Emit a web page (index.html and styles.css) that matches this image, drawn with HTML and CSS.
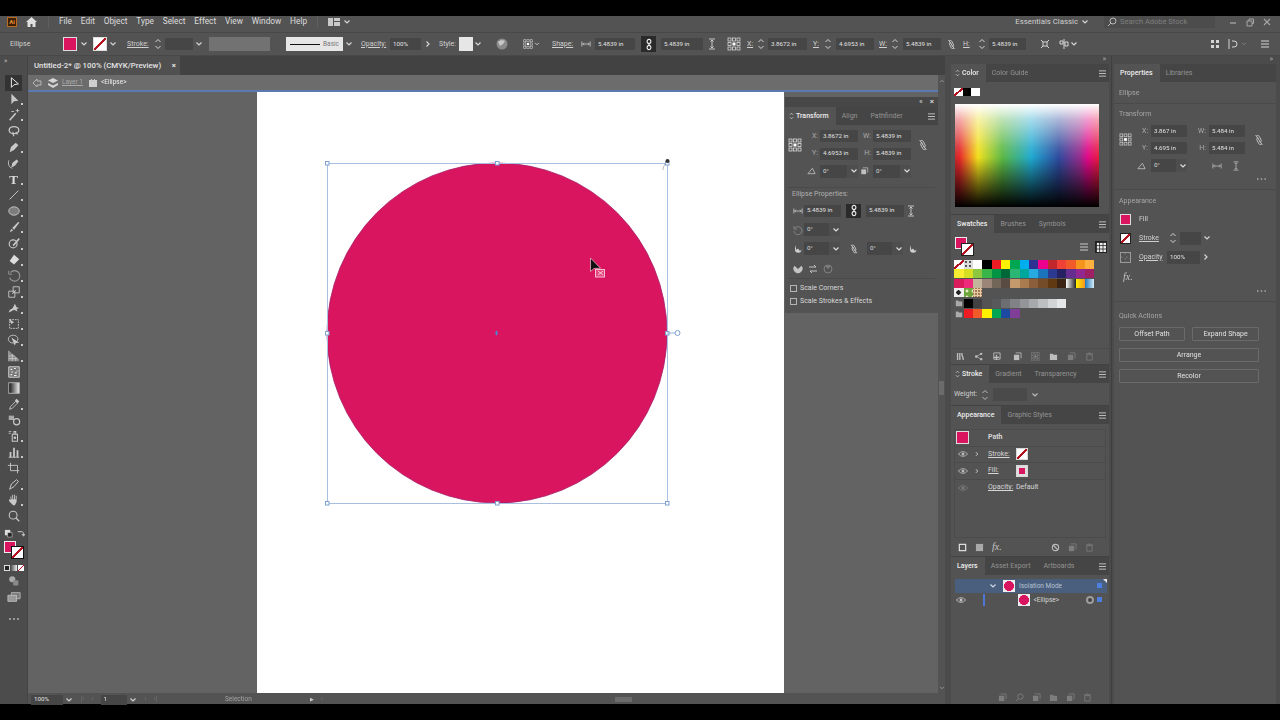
FILE: index.html
```html
<!DOCTYPE html>
<html lang="en">
<head>
    <meta charset="UTF-8">
    <title>Untitled-2* @ 100% (CMYK/Preview)</title>
    <link rel="stylesheet" href="styles.css">
</head>
<body>

<svg class="sprite" xmlns="http://www.w3.org/2000/svg">
    <symbol id="chev" viewBox="0 0 8 8"><path d="M1.5 2.5 4 5l2.500-2.500" fill="none" stroke="currentColor" stroke-width="1.200"/></symbol>
    <symbol id="right" viewBox="0 0 8 8"><path d="M2.500 1.500 5 4 2.500 6.500" fill="none" stroke="currentColor" stroke-width="1.200"/></symbol>
    <symbol id="spin" viewBox="0 0 8 12"><path d="M1.500 4 4 1.500 6.500 4M1.500 8 4 10.500 6.500 8" fill="none" stroke="currentColor" stroke-width="1"/></symbol>
    <symbol id="menu" viewBox="0 0 10 8"><path d="M1 1h8M1 4h8M1 7h8" stroke="currentColor" stroke-width="1.100"/></symbol>
    <symbol id="eye" viewBox="0 0 10 8"><path d="M.5 4C2.500 1 7.500 1 9.500 4 7.500 7 2.500 7 .5 4Z" fill="none" stroke="currentColor" stroke-width=".9"/><circle cx="5" cy="4" r="1.500" fill="currentColor"/></symbol>
    <symbol id="unlink" viewBox="0 0 12 14"><path d="M3 2.500c1-1.500 3-1 3.500.5l2 4c1 2-1 3-2 2M9 11.500c-1 1.500-3 1-3.500-.5l-2-4c-1-2 1-3 2-2M2 1l8 12" fill="none" stroke="currentColor" stroke-width="1.200"/></symbol>
    <symbol id="chain" viewBox="0 0 8 14"><rect x="2" y="1.500" width="4" height="4.500" rx="2" fill="none" stroke="currentColor" stroke-width="1.200"/><rect x="2" y="8" width="4" height="4.500" rx="2" fill="none" stroke="currentColor" stroke-width="1.200"/><path d="M4 5v4" stroke="currentColor" stroke-width="1.200"/></symbol>
    <symbol id="refpoint" viewBox="0 0 14 14"><g fill="none" stroke="currentColor" stroke-width=".8"><rect x="1" y="1" width="3" height="3"/><rect x="5.500" y="1" width="3" height="3"/><rect x="10" y="1" width="3" height="3"/><rect x="1" y="5.500" width="3" height="3"/><rect x="10" y="5.500" width="3" height="3"/><rect x="1" y="10" width="3" height="3"/><rect x="5.500" y="10" width="3" height="3"/><rect x="10" y="10" width="3" height="3"/></g><rect x="5.500" y="5.500" width="3" height="3" fill="#fff"/></symbol>
    <symbol id="hsize" viewBox="0 0 12 8"><path d="M1 1v6M11 1v6M2 4h8M3.500 2.500 2 4l1.500 1.500M8.500 2.500 10 4 8.500 5.500" fill="none" stroke="currentColor" stroke-width=".9"/></symbol>
    <symbol id="vsize" viewBox="0 0 8 12"><path d="M1 1h6M1 11h6M4 2v8M2.500 3.500 4 2l1.500 1.500M2.500 8.500 4 10l1.500-1.500" fill="none" stroke="currentColor" stroke-width=".9"/></symbol>
    <symbol id="corner" viewBox="0 0 10 10"><path d="M2 0v4.500a3.200 3.200 0 0 0 6.400 0L7 6 5 3.500 3.500 5Z" fill="currentColor" transform="translate(0 1)"/></symbol>
    <symbol id="trash" viewBox="0 0 10 10"><path d="M2 3h6v6H2zM1 2h8M4 1h2" fill="none" stroke="currentColor" stroke-width=".9"/></symbol>
    <symbol id="newitem" viewBox="0 0 10 10"><path d="M1 3h6v6H1z" fill="currentColor"/><path d="M3 1h6v6" fill="none" stroke="currentColor" stroke-width=".9"/></symbol>
    <symbol id="folder" viewBox="0 0 10 10"><path d="M1 2h3l1 1h4v6H1z" fill="currentColor"/></symbol>
    <symbol id="dots" viewBox="0 0 12 4"><circle cx="2" cy="2" r=".9" fill="currentColor"/><circle cx="6" cy="2" r=".9" fill="currentColor"/><circle cx="10" cy="2" r=".9" fill="currentColor"/></symbol>
    <symbol id="noentry" viewBox="0 0 10 10"><circle cx="5" cy="5" r="3.500" fill="none" stroke="currentColor" stroke-width="1.200"/><path d="m2.500 2.500 5 5" stroke="currentColor" stroke-width="1.200"/></symbol>
    <symbol id="angle" viewBox="0 0 10 8"><path d="M1 7h8L6 1Z" fill="none" stroke="currentColor" stroke-width=".9"/></symbol>
    <symbol id="library" viewBox="0 0 10 10"><path d="M1 1h1.500v8H1zM3.500 1H5v8H3.500zM5.500 1.500 7 1l2 7.500-1.500.5Z" fill="currentColor"/></symbol>
    <symbol id="share" viewBox="0 0 10 10"><circle cx="2.500" cy="5" r="1.500" fill="currentColor"/><circle cx="8" cy="2" r="1.300" fill="currentColor"/><circle cx="8" cy="8" r="1.300" fill="currentColor"/><path d="M8 2 2.500 5 8 8" fill="none" stroke="currentColor" stroke-width=".8"/></symbol>
    <symbol id="place" viewBox="0 0 10 10"><path d="M2 1h7v7H2z" fill="none" stroke="currentColor"/><path d="M5 3v6M2 6h6" stroke="currentColor" stroke-width="1.400"/></symbol>
</svg>

<div class="black-bar"></div>

<header class="menu-bar">
    <span class="ai-logo">Ai</span>
    <svg class="home-ico" viewBox="0 0 12 12"><path d="M6 1 .5 6H2v5h3V8h2v3h3V6h1.500Z" fill="currentColor"/></svg>
    <span class="menu-sep"></span>
    <nav class="menu-items">
        <span>File</span><span>Edit</span><span>Object</span><span>Type</span><span>Select</span><span>Effect</span><span>View</span><span>Window</span><span>Help</span>
    </nav>
    <span class="menu-sep"></span>
    <svg class="layout-ico" viewBox="0 0 12 8"><path d="M0 0h5v8H0zM6 0h6v3H6zM6 4h6v4H6z" fill="currentColor"/></svg>
    <svg class="ico8 ml3"><use href="#chev"/></svg>
    <div class="menu-right">
        <span class="workspace">Essentials Classic</span>
        <svg class="ico8 ml3"><use href="#chev"/></svg>
        <div class="stock-search">
            <svg class="search-ico" viewBox="0 0 10 10"><circle cx="6" cy="4" r="3" fill="none" stroke="currentColor"/><path d="M4 6 1 9" stroke="currentColor"/></svg>
            <span>Search Adobe Stock</span>
        </div>
        <div class="win-btns">
            <svg viewBox="0 0 10 10"><path d="M2 6h6" stroke="currentColor" stroke-width="1.300"/></svg>
            <svg viewBox="0 0 10 10"><path d="M2 4h5v5H2zM4 4V2h4.500v4.500H7" fill="none" stroke="currentColor"/></svg>
            <svg viewBox="0 0 10 10"><path d="m2 2 6 6M8 2 2 8" stroke="currentColor" stroke-width="1.100"/></svg>
        </div>
    </div>
</header>

<div class="control-bar">
    <span class="lbl w20 dim">Ellipse</span>
    <span class="swatch pink ml33"></span>
    <svg class="ico8 ml3"><use href="#chev"/></svg>
    <span class="swatch none ml5"></span>
    <svg class="ico8 ml2"><use href="#chev"/></svg>
    <span class="lbl u w21 ml10">Stroke:</span>
    <svg class="spin ml6"><use href="#spin"/></svg>
    <span class="field w28 ml3"></span>
    <svg class="ico8 ml2"><use href="#chev"/></svg>
    <span class="field disabled w61 ml6"></span>
    <div class="brush-def ml16"><i></i><span>Basic</span></div>
    <svg class="ico8 ml2"><use href="#chev"/></svg>
    <span class="lbl u w26 ml8">Opacity:</span>
    <span class="field w31 ml3">100%</span>
    <svg class="ico8 ml3"><use href="#right"/></svg>
    <span class="lbl w17 ml7">Style:</span>
    <span class="swatch light ml3"></span>
    <svg class="ico8 ml1"><use href="#chev"/></svg>
    <svg class="globe ml14" viewBox="0 0 12 12"><circle cx="6" cy="6" r="5.500" fill="#8a8a8a"/><path d="M2 4c2-2 5-2 7-1L7 6 4 8Z" fill="#c8c8c8"/></svg>
    <svg class="ico10 ml15"><use href="#refpoint"/></svg>
    <svg class="ico6 ml1"><use href="#chev"/></svg>
    <span class="lbl u w21 ml12">Shape:</span>
    <svg class="ico10 ml8"><use href="#hsize"/></svg>
    <span class="field w40 ml4">5.4839 in</span>
    <span class="chain-box ml6"><svg><use href="#chain"/></svg></span>
    <span class="field w42 ml5">5.4839 in</span>
    <svg class="ico8h ml5"><use href="#vsize"/></svg>
    <svg class="ico14 ml11"><use href="#refpoint"/></svg>
    <span class="lbl u w6 ml6">X:</span>
    <svg class="spin ml4"><use href="#spin"/></svg>
    <span class="field w39 ml3">3.8672 in</span>
    <span class="lbl u w6 ml6">Y:</span>
    <svg class="spin ml5"><use href="#spin"/></svg>
    <span class="field w38 ml4">4.6953 in</span>
    <span class="lbl u w7 ml5">W:</span>
    <svg class="spin ml5"><use href="#spin"/></svg>
    <span class="field w38 ml4">5.4839 in</span>
    <svg class="ico9 ml6"><use href="#unlink"/></svg>
    <span class="lbl u w6 ml7">H:</span>
    <svg class="spin ml9"><use href="#spin"/></svg>
    <span class="field w37 ml3">5.4839 in</span>
    <svg class="ico10 ml14" viewBox="0 0 10 10"><path d="M1 1l2 2M9 1 7 3M1 9l2-2M9 9 7 7M3 3h4v4H3z" fill="none" stroke="currentColor"/></svg>
    <svg class="ico10 ml9" viewBox="0 0 10 10"><path d="M5 0v10M1 2h3v3H1zM6 3h3v4H6z" fill="none" stroke="currentColor"/></svg>
    <svg class="ico8 ml1"><use href="#chev"/></svg>
    <div class="control-right">
        <svg class="ico10" viewBox="0 0 10 10"><path d="M1 1h3v3H1zM6 1h3v3H6zM1 6h3v3H1zM6 6h3v3H6z" fill="currentColor"/></svg>
        <svg class="ico10 ml8" viewBox="0 0 10 10"><path d="M1 0v10M4 2h2a3 3 0 0 1 0 6H4" fill="none" stroke="currentColor"/></svg>
        <svg class="ico6 ml3 faint"><use href="#chev"/></svg>
        <svg class="ico10 ml13"><use href="#menu"/></svg>
    </div>
</div>

<div class="workspace-row">

    <aside class="toolbar">
        <div class="strip-top"><span>&raquo;</span></div>
        <div class="tool-list">
            <div class="tool selected"><svg viewBox="0 0 16 16"><path d="M5 2v11l3-3 5-1Z" fill="none" stroke="#eee" stroke-width="1.100"/></svg></div>
            <div class="tool more"><svg viewBox="0 0 16 16"><path d="M5 2v12l3-3.500 5-.5Z" fill="currentColor"/></svg></div>
            <div class="tool more"><svg viewBox="0 0 16 16"><path d="M3 14 10 6" stroke="currentColor" stroke-width="1.800"/><path d="M12 1v4M10 3h4M5 4h3" stroke="currentColor"/></svg></div>
            <div class="tool"><svg viewBox="0 0 16 16"><ellipse cx="8" cy="7" rx="5.500" ry="4" fill="none" stroke="currentColor" stroke-width="1.500"/><path d="M7 9c-1 2 0 3 1 5M10 9l2 3" stroke="currentColor" stroke-width="1.300" fill="none"/></svg></div>
            <div class="tool more"><svg viewBox="0 0 16 16"><path d="M3 14l1.500-6L10 3l3 3-5 5.500Z" fill="currentColor"/></svg></div>
            <div class="tool"><svg viewBox="0 0 16 16"><path d="M5 13l1-5 5-4 2 2-4 5Z" fill="currentColor"/><path d="M2 5c-1 4 0 8 4 9" fill="none" stroke="currentColor"/></svg></div>
            <div class="tool more"><span class="type-t">T</span></div>
            <div class="tool more"><svg viewBox="0 0 16 16"><path d="m3 13 10-10" stroke="currentColor" stroke-width="1.100"/></svg></div>
            <div class="tool more"><svg viewBox="0 0 16 16"><ellipse cx="8" cy="8" rx="6" ry="4.800" fill="#7d7d7d" stroke="currentColor"/></svg></div>
            <div class="tool more"><svg viewBox="0 0 16 16"><path d="M13 2 6 9l2 2 6-8ZM5 10l2 2-4 2Z" fill="currentColor"/></svg></div>
            <div class="tool more"><svg viewBox="0 0 16 16"><circle cx="7" cy="9" r="4.500" fill="none" stroke="currentColor" stroke-width="1.300"/><path d="m7 11 7-8" stroke="currentColor" stroke-width="1.800"/></svg></div>
            <div class="tool more"><svg viewBox="0 0 16 16"><path d="m8 2 6 5-6 6-5-4Z" fill="#ddd"/></svg></div>
            <div class="tool more"><svg viewBox="0 0 16 16"><path d="M4 4a6 6 0 1 1-1 6" fill="none" stroke="#9a9a9a" stroke-width="1.300"/><path d="M2 2v4h4" fill="none" stroke="#9a9a9a"/></svg></div>
            <div class="tool more"><svg viewBox="0 0 16 16"><path d="M2 7h7v7H2zM7 2h7v7H7z" fill="none" stroke="currentColor"/><path d="m6 10 4-4" stroke="currentColor"/></svg></div>
            <div class="tool more"><svg viewBox="0 0 16 16"><path d="M2 13c1-5 4-3 5-6l2-4 2 4 3 1-3 1 1 3-4-2c-2 1-3 2-6 3Z" fill="currentColor"/></svg></div>
            <div class="tool more"><svg viewBox="0 0 16 16"><path d="M3 3h10v10H3z" fill="none" stroke="currentColor" stroke-dasharray="2 1"/><path d="M2 2l6 4-3 2Z" fill="currentColor"/></svg></div>
            <div class="tool more"><svg viewBox="0 0 16 16"><ellipse cx="7" cy="7" rx="5.500" ry="4.500" fill="none" stroke="currentColor"/><path d="M5 5l9 6-4 .5-1 3Z" fill="currentColor"/></svg></div>
            <div class="tool more"><svg viewBox="0 0 16 16"><path d="M2 2 14 12v2H2Z" fill="#8a8a8a"/><path d="M2 2v12M6 5.500V14M10 9v5M2 8h7M2 11h10" stroke="#ddd" stroke-width=".7"/></svg></div>
            <div class="tool"><svg viewBox="0 0 16 16"><path d="M2 2h12v12H2z" fill="#777" stroke="#ddd"/><path d="M4 5h2M8 4h2M11 7h1M5 8h2M9 9h2M4 11h2M8 12h3" stroke="#eee" stroke-width="1.200"/></svg></div>
            <div class="tool"><svg viewBox="0 0 16 16"><defs><linearGradient id="toolgrad"><stop offset="0" stop-color="#111"/><stop offset="1" stop-color="#eee"/></linearGradient></defs><rect x="2" y="2" width="12" height="12" fill="url(#toolgrad)" stroke="#bbb"/></svg></div>
            <div class="tool more"><svg viewBox="0 0 16 16"><path d="M3 14l1-3 6-6 2 2-6 6Z" fill="none" stroke="currentColor"/><path d="m9 4 2-2 3 3-2 2Z" fill="currentColor"/></svg></div>
            <div class="tool"><svg viewBox="0 0 16 16"><path d="M2 3h6v5H2z" fill="#aaa"/><circle cx="11" cy="10" r="3.500" fill="none" stroke="currentColor" stroke-width="1.300"/></svg></div>
            <div class="tool more"><svg viewBox="0 0 16 16"><path d="M6 6h6v8H6zM8 3h2v3H8z" fill="none" stroke="currentColor" stroke-width="1.200"/><path d="M2 3h3M2 5h2" stroke="currentColor"/><circle cx="9" cy="10" r="1.500" fill="currentColor"/></svg></div>
            <div class="tool more"><svg viewBox="0 0 16 16"><path d="M2 14h12" stroke="currentColor"/><path d="M3 8h2v6H3zM7 3h2v11H7zM11 6h2v8h-2z" fill="currentColor"/></svg></div>
            <div class="tool"><svg viewBox="0 0 16 16"><path d="M1 5h11v9M4 2v9h10" fill="none" stroke="currentColor"/></svg></div>
            <div class="tool more"><svg viewBox="0 0 16 16"><path d="M3 14l2-6 6-5 2 2-5 6Z" fill="none" stroke="currentColor" stroke-width="1.100"/></svg></div>
            <div class="tool more"><svg viewBox="0 0 16 16"><path d="M4 8V4h1v3h1V2h1v5h1V2h1v5h1V3h1v7l-2 4H7L3 10l-1-2 1-1Z" fill="currentColor"/></svg></div>
            <div class="tool"><svg viewBox="0 0 16 16"><circle cx="7" cy="7" r="4.500" fill="none" stroke="currentColor" stroke-width="1.200"/><path d="m10 10 4 4" stroke="currentColor" stroke-width="1.500"/></svg></div>
        </div>
        <div class="fill-stroke">
            <div class="fs-mini">
                <svg viewBox="0 0 10 10"><path d="M1 1h6v6H1z" fill="#ddd"/><path d="M4 4h5v5H4z" fill="#222" stroke="#ddd" stroke-width=".6"/></svg>
                <svg viewBox="0 0 10 10"><path d="M2 3h4c2 0 2.500 1 2.500 4M6.500 5.500 8.500 8 9.500 5.500" fill="none" stroke="#ccc" stroke-width="1.100"/></svg>
            </div>
            <div class="fs-stack">
                <span class="fs-fill"></span>
                <span class="fs-stroke"></span>
            </div>
            <div class="fs-modes"><i class="mode-color"></i><i class="mode-grad"></i><i class="none"></i></div>
        </div>
        <div class="tool draw-mode"><svg viewBox="0 0 16 16"><circle cx="6" cy="6" r="3.500" fill="#aaa"/><rect x="7" y="7" width="6" height="6" rx="1" fill="#8a8a8a"/></svg></div>
        <div class="tool"><svg viewBox="0 0 16 16"><path d="M5 3h10v7H5z" fill="#777" stroke="#ccc" stroke-width=".8"/><path d="M1 6h10v7H1z" fill="#999" stroke="#ccc" stroke-width=".8"/></svg></div>
        <svg class="tool-dots"><use href="#dots"/></svg>
    </aside>

    <main class="center">
        <div class="doc-tabs">
            <div class="doc-tab"><span>Untitled-2* @ 100% (CMYK/Preview)</span><b>&times;</b></div>
        </div>
        <div class="doc-row">
            <div class="doc-main">
                <div class="crumbs">
                    <svg class="crumb-back" viewBox="0 0 10 10"><path d="M5 1 1 5l4 4V7h4V3H5Z" fill="none" stroke="currentColor"/></svg>
                    <svg class="crumb-layers" viewBox="0 0 10 10"><path d="m5 0 5 2.500L5 5 0 2.500ZM0 5l5 2.500L10 5v2L5 10 0 7Z" fill="currentColor"/></svg>
                    <span class="crumb-layer">Layer 1</span>
                    <svg class="crumb-group" viewBox="0 0 10 10"><path d="M1 2h2V1h1v1h2V1h1v1h2v7H1Z" fill="currentColor"/></svg>
                    <span class="crumb-item">&lt;Ellipse&gt;</span>
                </div>
                <div class="canvas">
                    <div class="artboard">
                        <svg class="art" viewBox="0 0 527 601">
                            <circle cx="240" cy="241" r="170" fill="#d9155f" stroke="#a51a66" stroke-width=".8"/>
                            <rect x="70.500" y="71.500" width="340" height="340" fill="none" stroke="#a8bfe0"/>
                            <g fill="#fff" stroke="#7fa1d0">
                                <rect x="68.500" y="69.500" width="3.500" height="3.500"/>
                                <rect x="238.500" y="69.500" width="3.500" height="3.500"/>
                                <rect x="408.500" y="69.500" width="3.500" height="3.500"/>
                                <rect x="68.500" y="239.500" width="3.500" height="3.500"/>
                                <rect x="408.500" y="239.500" width="3.500" height="3.500"/>
                                <rect x="68.500" y="409.500" width="3.500" height="3.500"/>
                                <rect x="238.500" y="409.500" width="3.500" height="3.500"/>
                                <rect x="408.500" y="409.500" width="3.500" height="3.500"/>
                            </g>
                            <path d="M410 241h8" stroke="#8fb0da"/>
                            <circle cx="420.500" cy="241" r="2.500" fill="#fff" stroke="#7fa1d0"/>
                            <path d="M239 239h1v4h-1zM238 241h3" fill="#4c8ad0" stroke="#4c8ad0" stroke-width=".6"/>
                            <circle cx="410.500" cy="69" r="2" fill="#333"/>
                            <path d="M408 72c-1 2-2 4-2 6" fill="none" stroke="#999" stroke-width=".7"/>
                            <rect x="338.500" y="177.500" width="9" height="7.500" fill="#e6497f" stroke="#f6bdd2"/>
                            <path d="M341 179l5 4M346 179l-5 4" stroke="#fff" stroke-width=".7"/>
                            <path d="M333.500 166v13.500l3.500-3 6.500-.3Z" fill="#111" stroke="#f4c6d8" stroke-width=".7"/>
                        </svg>
                    </div>

                    <section class="float-panel">
                        <div class="float-top"><span>&laquo;</span><b>&times;</b></div>
                        <div class="tabs">
                            <span class="tab active"><svg class="tab-spin"><use href="#spin"/></svg>Transform</span>
                            <span class="tab">Align</span>
                            <span class="tab">Pathfinder</span>
                            <svg class="tab-menu"><use href="#menu"/></svg>
                        </div>
                        <div class="tf-grid">
                            <svg class="tf-ref"><use href="#refpoint"/></svg>
                            <span class="tf-lbl">X:</span><span class="field">3.8672 in</span>
                            <span class="tf-lbl">W:</span><span class="field">5.4839 in</span>
                            <svg class="tf-link"><use href="#unlink"/></svg>
                            <span class="tf-lbl">Y:</span><span class="field">4.6953 in</span>
                            <span class="tf-lbl">H:</span><span class="field">5.4839 in</span>
                            <svg class="tf-icon"><use href="#angle"/></svg><span class="combo">0°<svg class="ico8"><use href="#chev"/></svg></span>
                            <svg class="tf-icon"><use href="#newitem"/></svg><span class="combo">0°<svg class="ico8"><use href="#chev"/></svg></span>
                        </div>
                        <div class="rule ellipse-rule"></div>
                        <div class="ep-title">Ellipse Properties:</div>
                        <div class="ep-row ep-size">
                            <svg class="ico10"><use href="#hsize"/></svg>
                            <span class="field w37 ml1">5.4839 in</span>
                            <span class="chain-box ml5"><svg><use href="#chain"/></svg></span>
                            <span class="field w38 ml5">5.4839 in</span>
                            <svg class="ico8h ml3"><use href="#vsize"/></svg>
                        </div>
                        <div class="ep-row">
                            <svg class="ico10 faint" viewBox="0 0 10 10"><path d="M2 3a4 4 0 1 1-1 3M1 1v3h3" fill="none" stroke="currentColor"/></svg>
                            <span class="combo w36 ml1">0°<svg class="ico8"><use href="#chev"/></svg></span>
                        </div>
                        <div class="ep-row">
                            <svg class="ico10"><use href="#corner"/></svg>
                            <span class="combo w36 ml1">0°<svg class="ico8"><use href="#chev"/></svg></span>
                            <svg class="ico10 ml9"><use href="#unlink"/></svg>
                            <span class="combo w36 ml8">0°<svg class="ico8"><use href="#chev"/></svg></span>
                            <svg class="ico10 ml5"><use href="#corner"/></svg>
                        </div>
                        <div class="ep-row ep-icons">
                            <svg class="ico10" viewBox="0 0 10 10"><path d="M5 5 1.500 1.800A4.500 4.500 0 1 0 8.500 1.800Z" fill="currentColor"/></svg>
                            <svg class="ico10 ml5" viewBox="0 0 10 10"><path d="M1 3h7M6 1l2 2M9 7H2M4 9 2 7" fill="none" stroke="currentColor"/></svg>
                            <svg class="ico10 ml5 faint" viewBox="0 0 10 10"><circle cx="5" cy="5" r="4" fill="none" stroke="currentColor"/><path d="M5 5 2.500 2h5Z" fill="currentColor"/></svg>
                        </div>
                        <div class="rule scale-rule"></div>
                        <label class="check"><i></i>Scale Corners</label>
                        <label class="check"><i></i>Scale Strokes &amp; Effects</label>
                    </section>
                </div>
            </div>
            <div class="v-scroll">
                <svg class="ico6"><use href="#chev"/></svg>
                <i></i>
                <svg class="ico6"><use href="#chev"/></svg>
            </div>
        </div>
        <footer class="status-bar">
            <span class="field status-zoom">100%</span>
            <svg class="ico8 ml2"><use href="#chev"/></svg>
            <span class="status-nav ml8">|&lsaquo;</span>
            <span class="status-nav ml7">&lsaquo;</span>
            <span class="field status-page ml7">1</span>
            <svg class="ico8 ml2"><use href="#chev"/></svg>
            <span class="status-nav ml8">&rsaquo;</span>
            <span class="status-nav ml7">&rsaquo;|</span>
            <span class="status-tool">Selection</span>
            <span class="status-play">&#9654;</span>
            <span class="status-nav ml7">&lsaquo;</span>
            <i class="h-thumb"></i>
        </footer>
    </main>

    <div class="dock dock-mid">
        <div class="dock-top"><span>&raquo;</span></div>

        <section class="panel color-panel">
            <div class="tabs">
                <span class="tab active"><svg class="tab-spin"><use href="#spin"/></svg>Color</span>
                <span class="tab">Color Guide</span>
                <svg class="tab-menu"><use href="#menu"/></svg>
            </div>
            <div class="color-chips"><i class="none"></i><i class="chip-black"></i><i class="chip-white"></i></div>
            <div class="spectrum"></div>
        </section>

        <section class="panel swatch-panel">
            <div class="tabs">
                <span class="tab active">Swatches</span>
                <span class="tab">Brushes</span>
                <span class="tab">Symbols</span>
                <svg class="tab-menu"><use href="#menu"/></svg>
            </div>
            <div class="swatch-head">
                <div class="mini-fs"><span class="mini-fill"></span><span class="mini-stroke none"></span></div>
                <svg class="view-list"><use href="#menu"/></svg>
                <span class="view-grid"></span>
            </div>
            <div class="swatch-grid" id="swatchGrid"></div>
            <div class="panel-foot swatch-foot">
                <svg class="ico10"><use href="#library"/></svg>
                <svg class="ico10"><use href="#share"/></svg>
                <svg class="ico10"><use href="#place"/></svg>
                <svg class="ico10 sp3"><use href="#newitem"/></svg>
                <svg class="ico10 faint"><use href="#refpoint"/></svg>
                <svg class="ico10"><use href="#folder"/></svg>
                <svg class="ico10 faint"><use href="#newitem"/></svg>
                <svg class="ico10 faint"><use href="#trash"/></svg>
            </div>
        </section>

        <section class="panel stroke-panel">
            <div class="tabs">
                <span class="tab active"><svg class="tab-spin"><use href="#spin"/></svg>Stroke</span>
                <span class="tab">Gradient</span>
                <span class="tab">Transparency</span>
                <svg class="tab-menu"><use href="#menu"/></svg>
            </div>
            <div class="weight-row">
                <span class="lbl">Weight:</span>
                <svg class="spin"><use href="#spin"/></svg>
                <span class="field w34"></span>
                <svg class="ico8"><use href="#chev"/></svg>
            </div>
        </section>

        <section class="panel appearance-panel">
            <div class="tabs">
                <span class="tab active">Appearance</span>
                <span class="tab">Graphic Styles</span>
                <svg class="tab-menu"><use href="#menu"/></svg>
            </div>
            <div class="ap-list">
                <div class="ap-row"><span class="ap-eye"><span class="ap-thumb"></span></span><span class="ap-arrow"></span><b class="ap-name">Path</b></div>
                <div class="ap-row"><span class="ap-eye"><svg class="ico10"><use href="#eye"/></svg></span><span class="ap-arrow"><svg class="ico6"><use href="#right"/></svg></span><span class="ap-name u">Stroke:</span><span class="ap-swatch none"></span></div>
                <div class="ap-row"><span class="ap-eye"><svg class="ico10"><use href="#eye"/></svg></span><span class="ap-arrow"><svg class="ico6"><use href="#right"/></svg></span><span class="ap-name u">Fill:</span><span class="ap-swatch fill"></span></div>
                <div class="ap-row"><span class="ap-eye"><svg class="ico10 faint"><use href="#eye"/></svg></span><span class="ap-arrow"></span><span class="ap-name u">Opacity:</span><span class="ap-value">Default</span></div>
            </div>
            <div class="panel-foot ap-foot">
                <svg class="ico10" viewBox="0 0 10 10"><rect x="1.500" y="1.500" width="7" height="7" fill="none" stroke="#e4e4e4" stroke-width="1.300"/></svg>
                <svg class="ico10" viewBox="0 0 10 10"><rect x="1" y="1" width="8" height="8" fill="#aaa"/></svg>
                <span class="fx">fx.</span>
                <svg class="ico10 sp-auto"><use href="#noentry"/></svg>
                <svg class="ico10 faint"><use href="#newitem"/></svg>
                <svg class="ico10 faint"><use href="#trash"/></svg>
            </div>
        </section>

        <section class="panel layers-panel">
            <div class="tabs">
                <span class="tab active">Layers</span>
                <span class="tab">Asset Export</span>
                <span class="tab">Artboards</span>
                <svg class="tab-menu"><use href="#menu"/></svg>
            </div>
            <div class="layer-row isolation">
                <svg class="ico8 layer-chev"><use href="#chev"/></svg>
                <span class="layer-thumb"></span>
                <span class="layer-name">Isolation Mode</span>
                <i class="layer-sel"></i>
            </div>
            <div class="layer-row ellipse-row">
                <svg class="ico10 layer-eye"><use href="#eye"/></svg>
                <i class="layer-bar"></i>
                <span class="layer-thumb"></span>
                <span class="layer-name">&lt;Ellipse&gt;</span>
                <i class="layer-target"></i>
                <i class="layer-sel"></i>
            </div>
            <div class="panel-foot layer-foot faint">
                <svg class="ico10"><use href="#newitem"/></svg>
                <svg class="ico10" viewBox="0 0 10 10"><circle cx="6" cy="4" r="3" fill="none" stroke="currentColor"/><path d="M4 6 1 9" stroke="currentColor"/></svg>
                <svg class="ico10"><use href="#newitem"/></svg>
                <svg class="ico10"><use href="#folder"/></svg>
                <svg class="ico10"><use href="#newitem"/></svg>
                <svg class="ico10"><use href="#trash"/></svg>
            </div>
        </section>
    </div>

    <div class="dock dock-props">
        <div class="dock-top"><span>&raquo;</span></div>
        <section class="panel props-panel">
            <div class="tabs">
                <span class="tab active">Properties</span>
                <span class="tab">Libraries</span>
            </div>
            <div class="pr-section pr-ellipse"><span class="pr-title">Ellipse</span></div>
            <div class="pr-section pr-transform">
                <span class="pr-title">Transform</span>
                <div class="pr-grid">
                    <svg class="pr-ref"><use href="#refpoint"/></svg>
                    <span class="tf-lbl">X:</span><span class="field">3.867 in</span>
                    <span class="tf-lbl">W:</span><span class="field">5.484 in</span>
                    <svg class="pr-link"><use href="#unlink"/></svg>
                    <span class="tf-lbl">Y:</span><span class="field">4.695 in</span>
                    <span class="tf-lbl">H:</span><span class="field">5.484 in</span>
                    <svg class="tf-icon"><use href="#angle"/></svg><span class="combo pr-angle">0°<svg class="ico8"><use href="#chev"/></svg></span>
                    <div class="pr-flips"><svg class="ico10"><use href="#hsize"/></svg><svg class="ico10"><use href="#vsize"/></svg></div>
                </div>
                <svg class="pr-dots"><use href="#dots"/></svg>
            </div>
            <div class="pr-section pr-appearance">
                <span class="pr-title">Appearance</span>
                <div class="pr-row fill-row"><span class="pr-swatch pink"></span><span class="lbl dim">Fill</span></div>
                <div class="pr-row stroke-row"><span class="pr-swatch none"></span><span class="lbl u">Stroke</span><svg class="spin ml10"><use href="#spin"/></svg><span class="field w21 ml3"></span><svg class="ico8 ml2"><use href="#chev"/></svg></div>
                <div class="pr-row opacity-row"><span class="pr-swatch checker"></span><span class="lbl u">Opacity</span><span class="field w33 ml8">100%</span><svg class="ico8 ml2"><use href="#right"/></svg></div>
                <span class="fx pr-fx">fx.</span>
                <svg class="pr-dots"><use href="#dots"/></svg>
            </div>
            <div class="pr-section pr-quick">
                <span class="pr-title">Quick Actions</span>
                <div class="quick-grid">
                    <button type="button">Offset Path</button>
                    <button type="button">Expand Shape</button>
                    <button type="button" class="wide">Arrange</button>
                    <button type="button" class="wide">Recolor</button>
                </div>
            </div>
        </section>
    </div>
</div>

<div class="black-bar bottom"></div>

<script src="script.js"></script>
</body>
</html>
```

FILE: styles.css
```css
* {
    box-sizing: border-box;
}
html, body {
    margin: 0;
    height: 720px;
    overflow: hidden;
}
body {
    display: flex;
    flex-direction: column;
    width: 1280px;
    background-color: #000;
    color: #d4d4d4;
    font-family: Roboto, "Liberation Sans", sans-serif;
    font-size: 7px;
    line-height: 1;
    /* the reference is a compressed video frame, slightly soft everywhere */
    filter: blur(.3px);
}
svg {
    display: block;
    flex: none;
}
.sprite {
    position: absolute;
    width: 0;
    height: 0;
}
.black-bar {
    flex: none;
    height: 16px;
    background-color: #000;
}

/* spacing and width helpers for the dense bars */
.ml1 { margin-left: 1px; }
.ml2 { margin-left: 2px; }
.ml3 { margin-left: 3px; }
.ml4 { margin-left: 4px; }
.ml5 { margin-left: 5px; }
.ml6 { margin-left: 6px; }
.ml7 { margin-left: 7px; }
.ml8 { margin-left: 8px; }
.ml9 { margin-left: 9px; }
.ml10 { margin-left: 10px; }
.ml11 { margin-left: 11px; }
.ml12 { margin-left: 12px; }
.ml13 { margin-left: 13px; }
.ml14 { margin-left: 14px; }
.ml15 { margin-left: 15px; }
.ml16 { margin-left: 16px; }
.ml33 { margin-left: 33px; }
.w6 { width: 6px; }
.w7 { width: 7px; }
.w17 { width: 17px; }
.w20 { width: 20px; }
.w21 { width: 21px; }
.w26 { width: 26px; }
.w28 { width: 28px; }
.w31 { width: 31px; }
.w33 { width: 33px; }
.w34 { width: 34px; }
.w36 { width: 36px; }
.w37 { width: 37px; }
.w38 { width: 38px; }
.w39 { width: 39px; }
.w40 { width: 40px; }
.w42 { width: 42px; }
.w61 { width: 61px; }

.ico6 { width: 6px; height: 6px; }
.ico8 { width: 8px; height: 8px; }
.ico8h { width: 8px; height: 12px; }
.ico9 { width: 9px; height: 11px; }
.ico10 { width: 10px; height: 10px; }
.ico14 { width: 14px; height: 14px; }
.spin { width: 8px; height: 12px; }
.faint { opacity: .4; }
.dim { color: #a8a8a8; }
.lbl {
    flex: none;
    white-space: nowrap;
    color: #cfcfcf;
}
.u {
    text-decoration: underline;
    text-underline-offset: 1px;
}

.field {
    display: flex;
    align-items: center;
    flex: none;
    height: 12px;
    padding-left: 3px;
    background-color: #464646;
    color: #e2e2e2;
    font-size: 6.200px;
    white-space: nowrap;
}
.field.disabled {
    height: 14px;
    background-color: #727272;
}
.combo {
    display: flex;
    align-items: center;
    justify-content: space-between;
    height: 13px;
    padding-left: 3px;
    background: linear-gradient(to right, #464646 0 calc(100% - 11px), #4e4e4e calc(100% - 11px));
    color: #dcdcdc;
    font-size: 6.200px;
}
.swatch {
    flex: none;
    width: 14px;
    height: 14px;
    border: 1px solid #ddd;
}
.pink { background-color: #d9155f; }
.light { background-color: #e6e6e6; border-color: #e6e6e6; }
.none {
    background-color: #fff;
    background-image: linear-gradient(to top left, transparent 42%, #b5121f 42% 58%, transparent 58%);
}
.chain-box {
    display: flex;
    align-items: center;
    justify-content: center;
    flex: none;
    width: 15px;
    height: 16px;
    background-color: #2a2a2a;
    color: #eee;
}
.chain-box svg {
    width: 8px;
    height: 13px;
}

.menu-bar {
    display: flex;
    align-items: center;
    flex: none;
    height: 16px;
    padding: 0 0 5px 7px;
    background-color: #535353;
}
.ai-logo {
    flex: none;
    width: 10px;
    height: 10px;
    border: 1px solid #b86a1e;
    background-color: #3a1f06;
    color: #e9933a;
    font-size: 6px;
    font-weight: 700;
    line-height: 8px;
    text-align: center;
}
.home-ico {
    width: 13px;
    height: 12px;
    margin-left: 8px;
    color: #e0e0e0;
}
.menu-sep {
    flex: none;
    width: 1px;
    height: 12px;
    margin-left: 10px;
    background-color: #5f5f5f;
}
.menu-items {
    display: flex;
    gap: 8.800px;
    margin-left: 10px;
    font-size: 8.300px;
    color: #dcdcdc;
}
.layout-ico {
    width: 12px;
    height: 8px;
    margin-left: 10px;
    color: #c9c9c9;
}
.menu-right {
    display: flex;
    align-items: center;
    margin-left: auto;
}
.workspace {
    font-size: 7.800px;
    color: #cfcfcf;
}
.stock-search {
    display: flex;
    align-items: center;
    width: 111px;
    height: 12px;
    margin-left: 15px;
    padding-left: 3px;
    background-color: #4c4c4c;
    color: #7f7f7f;
    font-size: 7.500px;
}
.search-ico {
    width: 10px;
    height: 10px;
    margin-right: 3px;
    color: #b8b8b8;
}
.win-btns {
    display: flex;
    gap: 7px;
    width: 65px;
    padding-left: 13px;
    color: #a6a6a6;
}
.win-btns svg {
    width: 10px;
    height: 10px;
}

.control-bar {
    display: flex;
    align-items: center;
    flex: none;
    height: 24px;
    padding-left: 10px;
    background-color: #535353;
    border-top: 1px solid #484848;
    border-bottom: 1px solid #484848;
}
.brush-def {
    display: flex;
    align-items: center;
    flex: none;
    width: 57px;
    height: 14px;
    padding: 0 4px;
    gap: 3px;
    background-color: #e6e6e6;
    color: #777;
    font-size: 6.500px;
}
.brush-def i {
    flex: 1;
    height: 1px;
    background-color: #111;
}
.globe {
    width: 12px;
    height: 12px;
}
.control-right {
    display: flex;
    align-items: center;
    margin-left: auto;
    padding-right: 10px;
}

.workspace-row {
    display: flex;
    flex: 1;
    min-height: 0;
}

.toolbar {
    display: flex;
    flex-direction: column;
    flex: none;
    width: 28px;
    background-color: #4c4c4c;
    border-right: 1px solid #444;
    color: #c9c9c9;
}
.strip-top {
    height: 19px;
    padding: 2px 0 0 4px;
    font-size: 7px;
    color: #bbb;
}
.tool {
    position: relative;
    display: flex;
    align-items: center;
    justify-content: center;
    width: 17px;
    height: 16.050px;
    margin-left: 5px;
}
.tool svg {
    width: 14px;
    height: 14px;
}
.tool.selected {
    background-color: #333;
}
.tool.more::after {
    content: "";
    position: absolute;
    right: -1px;
    bottom: 2px;
    width: 2px;
    height: 2px;
    background-color: #c9c9c9;
}
.type-t {
    color: #ddd;
    font-family: "Liberation Serif", serif;
    font-size: 13px;
    font-weight: 700;
}
.fill-stroke {
    display: flex;
    flex-direction: column;
    padding-left: 4px;
}
.fs-mini {
    display: flex;
    justify-content: space-between;
    width: 21px;
    height: 10px;
    margin-top: 5px;
}
.fs-mini svg {
    width: 9px;
    height: 9px;
}
.fs-stack {
    position: relative;
    height: 19px;
    margin-top: 2px;
}
.fs-fill {
    position: absolute;
    left: 0;
    top: 0;
    width: 12px;
    height: 12px;
    background-color: #d9155f;
    border: 1px solid #eee;
}
.fs-stroke {
    position: absolute;
    left: 7px;
    top: 5px;
    width: 13px;
    height: 13px;
    border: 1px solid #111;
    background-color: #fff;
    background-image: linear-gradient(to top left, transparent 42%, #b5121f 42% 58%, transparent 58%);
}
.fs-modes {
    display: flex;
    gap: 1px;
    margin-top: 5px;
}
.fs-modes i {
    width: 6px;
    height: 6px;
}
.mode-color {
    background-color: #222;
    border: 1px solid #ddd;
}
.mode-grad {
    background: linear-gradient(to right, #555, #eee);
}
.draw-mode {
    margin-top: 2px;
}
.tool-dots {
    width: 12px;
    height: 4px;
    margin: 12px 0 0 8px;
    color: #bdbdbd;
}

.center {
    display: flex;
    flex-direction: column;
    flex: none;
    width: 917px;
    background-color: #535353;
}
.doc-tabs {
    display: flex;
    flex: none;
    height: 19px;
    background-color: #424242;
}
.doc-tab {
    display: flex;
    align-items: center;
    justify-content: space-between;
    width: 152px;
    padding: 0 4px 0 6px;
    background-color: #505050;
    color: #e4e4e4;
    font-size: 7.800px;
    font-weight: 500;
}
.doc-row {
    display: flex;
    flex: 1;
    min-height: 0;
}
.doc-main {
    display: flex;
    flex-direction: column;
    flex: none;
    width: 910px;
}
.crumbs {
    display: flex;
    align-items: center;
    flex: none;
    height: 17px;
    padding-left: 4px;
    background-color: #6c6c6c;
    border-bottom: 2px solid #5b79b1;
    color: #b8b8b8;
    font-size: 6.500px;
}
.crumb-back {
    width: 10px;
    height: 10px;
}
.crumb-layers {
    width: 10px;
    height: 10px;
    margin-left: 6px;
    color: #d5d5d5;
}
.crumb-layer {
    margin-left: 4px;
    color: #a9a9a9;
    text-decoration: underline;
}
.crumb-group {
    width: 10px;
    height: 10px;
    margin-left: 5px;
    color: #cfcfcf;
}
.crumb-item {
    margin-left: 3px;
    color: #eee;
}
.canvas {
    position: relative;
    flex: 1;
    min-height: 0;
    padding-left: 229px;
    background-color: #636363;
}
.artboard {
    width: 527px;
    height: 100%;
    background-color: #fff;
}
.art {
    width: 527px;
    height: 601px;
    overflow: visible;
}

.float-panel {
    position: absolute;
    left: 757px;
    top: 5px;
    width: 153px;
    height: 216px;
    background-color: #535353;
    color: #d0d0d0;
}
.float-top {
    display: flex;
    align-items: center;
    justify-content: flex-end;
    gap: 7px;
    height: 10px;
    padding-right: 4px;
    background-color: #474747;
    font-size: 8px;
}
.tabs {
    display: flex;
    align-items: stretch;
    flex: none;
    height: 18px;
    background-color: #454545;
    color: #939393;
    font-size: 7px;
}
.tab {
    display: flex;
    align-items: center;
    padding: 0 7px 0 6px;
    white-space: nowrap;
}
.tab.active {
    background-color: #535353;
    color: #ececec;
    font-weight: 500;
}
.tab-spin {
    width: 5px;
    height: 8px;
    margin: 0 2px 0 -2px;
}
.tab-menu {
    width: 9px;
    height: 7px;
    margin: auto 2px auto auto;
    color: #c2c2c2;
}
.tf-grid {
    display: grid;
    grid-template-columns: 3px 14px 8px 10px 38px 15px 38px 20px;
    grid-template-rows: 12px 12px 12px;
    row-gap: 5.500px;
    margin-top: 5px;
    align-items: center;
}
.tf-ref {
    grid-column: 2;
    grid-row: 1 / span 2;
    width: 14px;
    height: 14px;
    color: #ddd;
}
.tf-lbl {
    color: #aaa;
    text-align: right;
    padding-right: 2px;
}
.tf-link {
    grid-column: 8;
    grid-row: 1 / span 2;
    width: 10px;
    height: 12px;
    margin-left: 7px;
    color: #c8c8c8;
}
.tf-grid .tf-lbl:nth-of-type(1), .tf-grid .tf-lbl:nth-of-type(5) {
    grid-column: 4;
}
.tf-icon {
    width: 9px;
    height: 8px;
    justify-self: end;
    margin-right: 4px;
    color: #c2c2c2;
}
.tf-grid > .tf-icon:nth-of-type(3) {
    grid-column: 3 / span 2;
}
.rule {
    height: 1px;
    background-color: #4a4a4a;
}
.ellipse-rule {
    margin: 10px 3px 0;
}
.ep-title {
    margin: 3px 0 0 7px;
    height: 9px;
    color: #b0b0b0;
}
.ep-row {
    display: flex;
    align-items: center;
    height: 13px;
    margin-top: 6px;
    padding-left: 8px;
    color: #cfcfcf;
}
.ep-size {
    margin-top: 4px;
}
.ep-icons {
    margin-top: 7px;
    color: #c4c4c4;
}
.ep-row .chain-box {
    height: 14px;
}
.scale-rule {
    margin: 3px 3px 5px;
}
.check {
    display: flex;
    align-items: center;
    gap: 3px;
    height: 8px;
    margin: 0 0 5.500px 5px;
    color: #d8d8d8;
}
.check i {
    width: 7px;
    height: 7px;
    border: 1px solid #b4b4b4;
}

.v-scroll {
    position: relative;
    display: flex;
    flex-direction: column;
    align-items: center;
    justify-content: space-between;
    width: 7px;
    padding: 3px 0 2px;
    background-color: #535353;
    color: #9a9a9a;
}
.v-scroll svg:first-child {
    transform: rotate(180deg);
}
.v-scroll i {
    position: absolute;
    left: 1px;
    top: 306px;
    width: 5px;
    height: 14px;
    background-color: #6b6b6b;
}

.status-bar {
    position: relative;
    display: flex;
    align-items: center;
    flex: none;
    height: 11px;
    padding: 2px 0 0 3px;
    font-size: 6.500px;
    color: #d0d0d0;
}
.status-zoom {
    width: 32px;
    height: 10px;
}
.status-page {
    width: 26px;
    height: 10px;
}
.status-nav {
    color: #777;
}
.status-tool {
    margin-left: 68px;
    color: #a4a4a4;
}
.status-play {
    margin-left: 58px;
    color: #c9c9c9;
    font-size: 5px;
}
.h-thumb {
    position: absolute;
    left: 587px;
    top: 4px;
    width: 17px;
    height: 5px;
    background-color: #6b6b6b;
}

.dock {
    display: flex;
    flex-direction: column;
    flex: none;
    background-color: #4b4b4b;
}
.dock-mid {
    width: 167px;
    padding-left: 6px;
    padding-right: 2px;
    border-right: 1px solid #3f3f3f;
}
.dock-props {
    width: 168px;
    padding-left: 2px;
    padding-right: 4px;
}
.dock-top {
    flex: none;
    height: 8px;
    padding-right: 3px;
    text-align: right;
    font-size: 7px;
    color: #b5b5b5;
}
.panel {
    display: flex;
    flex-direction: column;
    background-color: #535353;
    border-bottom: 1px solid #424242;
    overflow: hidden;
}

.color-panel {
    height: 151px;
}
.color-chips {
    display: flex;
    margin: 6px 0 0 3px;
}
.color-chips i {
    width: 8.700px;
    height: 8px;
}
.chip-black {
    background-color: #000;
}
.chip-white {
    background-color: #fff;
}
.spectrum {
    width: 144px;
    height: 103px;
    margin: 8px 0 0 4px;
    background:
        linear-gradient(to bottom, #fff 0%, rgba(255, 255, 255, .6) 15%, rgba(255, 255, 255, .12) 42%, rgba(0, 0, 0, 0) 52%, rgba(0, 0, 0, .55) 78%, #000 100%),
        linear-gradient(to right, #c42a2c 0%, #e5252a 3%, #f2e01c 16%, #5ab845 33%, #1fa9d0 53%, #2f4a9e 72%, #8e2f8f 86%, #e0088a 92%, #e81c3c 100%);
}

.swatch-panel {
    height: 150px;
}
.swatch-head {
    position: relative;
    display: flex;
    align-items: center;
    height: 27px;
}
.mini-fs {
    position: relative;
    width: 24px;
    height: 22px;
    margin-left: 3px;
}
.mini-fill {
    position: absolute;
    left: 1px;
    top: 1px;
    width: 12px;
    height: 12px;
    background-color: #d9155f;
    border: 1px solid #eee;
}
.mini-stroke {
    position: absolute;
    left: 7px;
    top: 7px;
    width: 13px;
    height: 13px;
    border: 1px solid #222;
}
.view-list {
    width: 10px;
    height: 10px;
    margin-left: auto;
    color: #c9c9c9;
}
.view-grid {
    width: 12px;
    height: 12px;
    margin: 0 2px 0 6px;
    border: 1px solid #222;
    background-color: #eee;
    background-image: linear-gradient(#222 1px, transparent 1px), linear-gradient(to right, #222 1px, transparent 1px);
    background-size: 3.300px 3.300px;
}
.swatch-grid {
    display: flex;
    flex-direction: column;
    padding-left: 3.300px;
    height: 65px;
}
.sw-row {
    display: flex;
    height: 9px;
    margin-bottom: .3px;
}
.sw-row.spaced {
    margin-top: 1.500px;
}
.sw {
    flex: none;
    width: 9.330px;
    height: 100%;
}
.sw-folder {
    color: #aaa;
    padding: .5px 0 0 .5px;
}
.sw-folder svg {
    width: 8px;
    height: 8px;
}
.sw-reg {
    background-color: #ddd;
    background-image: radial-gradient(#555 1px, transparent 1.200px);
    background-size: 4px 4px;
}
.sw-pat1 {
    background-color: #eee;
    background-image: radial-gradient(#222 2px, transparent 2.400px);
    background-size: 9px 9px;
}
.sw-pat2 {
    background-color: #6da53a;
    background-image: radial-gradient(#e9e9c8 1.300px, transparent 1.700px);
    background-size: 6px 6px;
}
.sw-pat3 {
    background-color: #a27a58;
    background-image: radial-gradient(#e4c9a3 1px, transparent 1.400px);
    background-size: 3px 3px;
}
.panel-foot {
    display: flex;
    align-items: center;
    color: #bdbdbd;
}
.panel-foot svg {
    width: 9px;
    height: 9px;
}
.swatch-foot {
    gap: 9px;
    height: 16px;
    margin-top: auto;
    padding-left: 5px;
    border-top: 1px solid #4b4b4b;
}
.swatch-foot .sp3 {
    margin-left: 3px;
}

.stroke-panel {
    height: 41px;
}
.weight-row {
    display: flex;
    align-items: center;
    gap: 4px;
    margin: 5px 0 0 3px;
    color: #bbb;
}
.weight-row .lbl {
    width: 23px;
}
.weight-row .field {
    background-color: #4a4a4a;
    height: 13px;
}

.appearance-panel {
    height: 151px;
}
.ap-list {
    display: flex;
    flex-direction: column;
    height: 124px;
    margin: 5px 3px 0;
    border: 1px solid #4b4b4b;
}
.ap-row {
    display: flex;
    align-items: center;
    height: 16.500px;
    border-bottom: 1px solid #4b4b4b;
}
.ap-row:last-child {
    border-bottom: none;
}
.ap-eye {
    display: flex;
    align-items: center;
    justify-content: center;
    width: 15px;
    height: 100%;
    color: #b8b8b8;
}
.ap-thumb {
    flex: none;
    width: 13px;
    height: 13px;
    background-color: #d9155f;
    border: 1px solid #ddd;
}
.ap-arrow {
    display: flex;
    align-items: center;
    justify-content: center;
    width: 14px;
    height: 100%;
    color: #d0d0d0;
}
.ap-name {
    width: 28px;
    margin-left: 4px;
    color: #d6d6d6;
}
.ap-swatch {
    width: 12px;
    height: 12px;
    border: 1px solid #222;
    outline: 1px solid #d8d8d8;
    outline-offset: -1px;
}
.ap-swatch.fill {
    background-color: #ddd;
    background-image: linear-gradient(#d9155f, #d9155f);
    background-size: 6px 6px;
    background-position: center;
    background-repeat: no-repeat;
}
.ap-value {
    margin-left: 0;
    color: #d6d6d6;
}
.ap-foot {
    gap: 8px;
    height: 20px;
    padding: 0 15px 0 7px;
}
.fx {
    color: #c4c4c4;
    font-family: "Liberation Serif", serif;
    font-size: 10px;
    font-style: italic;
}
.sp-auto {
    margin-left: auto;
}

.layers-panel {
    position: relative;
    flex: 1;
    min-height: 0;
    border-bottom: none;
}
.layer-row {
    position: relative;
    display: flex;
    align-items: center;
    height: 14px;
    margin: 0 2px 0 4px;
}
.isolation {
    margin-top: 4px;
    background-color: #4a5f7e;
}
.isolation::after {
    content: "";
    position: absolute;
    right: 0;
    top: 0;
    border-top: 4px solid #e8e8e8;
    border-left: 4px solid transparent;
}
.layer-chev {
    margin-left: 34px;
    color: #cfd8e6;
}
.layer-thumb {
    width: 12px;
    height: 12px;
    margin-left: 6px;
    background-color: #111;
    background-image: radial-gradient(circle, #d9155f 4.800px, #eee 5.200px);
}
.layer-name {
    margin-left: 4px;
    color: #d6d6d6;
    font-size: 6.500px;
}
.isolation .layer-name {
    color: #b7c2d2;
}
.layer-sel {
    position: absolute;
    right: 5px;
    top: 4px;
    width: 5px;
    height: 5px;
    background-color: #4c7fe0;
}
.layer-eye {
    margin-left: 1px;
    color: #c4c4c4;
}
.layer-bar {
    width: 1.500px;
    height: 12px;
    margin-left: 17px;
}
.ellipse-row .layer-bar {
    background-color: #4f76d0;
}
.ellipse-row .layer-thumb {
    margin-left: 33px;
}
.layer-target {
    position: absolute;
    right: 13px;
    top: 3px;
    width: 8px;
    height: 8px;
    border-radius: 50%;
    border: 2px solid #9c9c9c;
    background-color: #444;
}
.layer-foot {
    position: absolute;
    left: 47px;
    bottom: 2px;
    gap: 8px;
}

.props-panel {
    flex: 1;
    min-height: 0;
    border-bottom: none;
}
.pr-section {
    position: relative;
    flex: none;
    padding-left: 5px;
    border-bottom: 1px solid #4a4a4a;
}
.pr-section:last-child {
    border-bottom: none;
}
.pr-title {
    display: block;
    color: #a6a6a6;
}
.pr-ellipse {
    height: 22px;
    padding-top: 8px;
}
.pr-transform {
    height: 86px;
    padding-top: 7px;
}
.pr-grid {
    display: grid;
    grid-template-columns: 23px 9px 36px 22px 36px 20px;
    grid-template-rows: 12px 12px 13px;
    row-gap: 5px;
    margin-top: 7px;
    align-items: center;
}
.pr-ref {
    grid-column: 1;
    grid-row: 1 / span 2;
    width: 13px;
    height: 13px;
    color: #c8c8c8;
}
.pr-link {
    grid-column: 6;
    grid-row: 1 / span 2;
    width: 10px;
    height: 12px;
    margin-left: 9px;
    color: #c0c0c0;
}
.pr-grid > .tf-lbl:nth-of-type(1) {
    grid-column: 2;
}
.pr-grid .tf-lbl {
    padding-right: 3px;
}
.pr-grid .field {
    height: 12px;
}
.pr-grid > span:nth-of-type(5) {
    grid-column: 2;
}
.pr-grid > .tf-icon {
    grid-column: 1 / span 2;
    margin-right: 5px;
}
.pr-angle {
    width: 36px;
}
.pr-flips {
    display: flex;
    gap: 9px;
    grid-column: 4 / span 2;
    padding-left: 25px;
    color: #bdbdbd;
}
.pr-dots {
    position: absolute;
    right: 9px;
    bottom: 8px;
    width: 11px;
    height: 4px;
    color: #bdbdbd;
}
.pr-appearance {
    height: 112px;
    padding-top: 8px;
}
.pr-row {
    display: flex;
    align-items: center;
    height: 12px;
}
.fill-row {
    margin-top: 8px;
}
.stroke-row, .opacity-row {
    margin-top: 7px;
}
.pr-swatch {
    flex: none;
    width: 11px;
    height: 11px;
    margin: 0 8px 0 1px;
    border: 1px solid #222;
}
.pr-swatch.pink {
    border-color: #ddd;
}
.pr-swatch.checker {
    border-color: #999;
    background-image: linear-gradient(45deg, #6a6a6a 25%, transparent 25% 75%, #6a6a6a 75%);
    background-size: 5px 5px;
}
.pr-row .lbl {
    width: 20px;
}
.pr-row .field {
    height: 13px;
}
.pr-fx {
    display: block;
    margin: 9px 0 0 4px;
}
.pr-quick {
    padding-top: 11px;
}
.quick-grid {
    display: grid;
    grid-template-columns: 66px 67px;
    gap: 7px;
    margin-top: 7px;
    width: 140px;
}
.quick-grid button {
    height: 14px;
    padding: 0;
    border: 1px solid #6a6a6a;
    border-radius: 1px;
    background-color: #535353;
    color: #e0e0e0;
    font-family: inherit;
    font-size: 7px;
}
.quick-grid .wide {
    grid-column: 1 / span 2;
}
```

FILE: script.js
```js
// swatch rows as shown in the panel, "-" leaves an empty cell
var swatchRows = [
    ['none', 'reg', '#fff', '#000', '#ed1c24', '#fff200', '#00a651', '#00aeef', '#2e3192', '#ec008c', '#c1272d', '#ef4136', '#f15a29', '#f7941d', '#fbb040'],
    ['#f9ed32', '#d7df23', '#8dc63f', '#39b54a', '#009444', '#006838', '#2bb673', '#00a79d', '#27aae1', '#1c75bc', '#2b3990', '#262262', '#662d91', '#92278f', '#9e1f63'],
    ['#da1c5c', '#ee2a7b', '#c2b59b', '#9b8579', '#726658', '#594a42', '#c49a6c', '#a97c50', '#8b5e3c', '#754c29', '#603913', '#3c2415',
        'linear-gradient(to right, #fff, #222)', 'linear-gradient(to right, #fff200, #f7941d)', 'linear-gradient(to right, #1c75bc, #d7eefa)'],
    ['pat1', 'pat2', 'pat3'],
    ['folder', '#000', '#414042', '-', '#58595b', '#6d6e71', '#808285', '#939598', '#a7a9ac', '#bcbec0', '#d1d3d4', '#e6e7e8'],
    ['folder', '#ed1c24', '#f15a29', '#fff200', '#00a651', '#1c4aa0', '#7f3f98']
];
var grid = document.getElementById('swatchGrid');

swatchRows.forEach(function (colors, rowIndex) {
    var row = document.createElement('div');
    row.className = rowIndex > 3 ? 'sw-row spaced' : 'sw-row';
    colors.forEach(function (value) {
        var cell = document.createElement('span');
        cell.className = 'sw';
        if (value === 'none') {
            cell.classList.add('none');
        } else if (value === 'reg') {
            cell.classList.add('sw-reg');
        } else if (value.indexOf('pat') === 0) {
            cell.classList.add('sw-' + value);
        } else if (value === 'folder') {
            cell.classList.add('sw-folder');
            cell.innerHTML = '<svg><use href="#folder"/></svg>';
        } else if (value !== '-') {
            cell.style.background = value;
        }
        row.appendChild(cell);
    });
    grid.appendChild(row);
});
```
